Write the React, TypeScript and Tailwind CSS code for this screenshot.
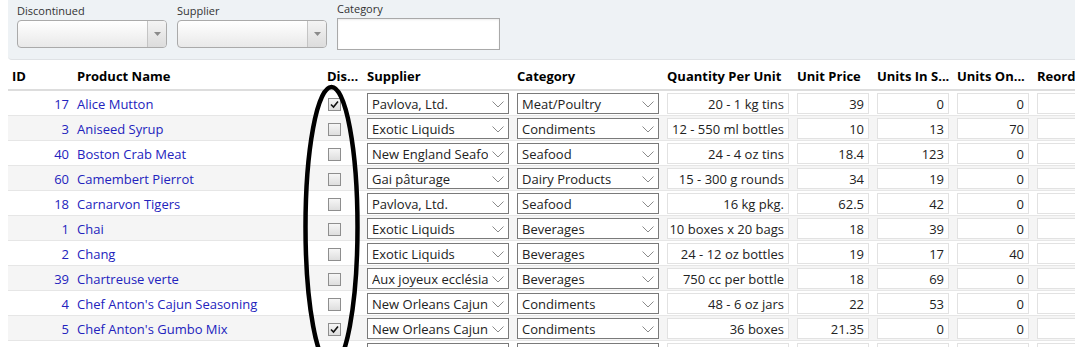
import React from 'react';

type Row = {
  id: number;
  name: string;
  disc: boolean;
  sup: string;
  cat: string;
  qty: string;
  price: string;
  stock: string;
  order: string;
  reorder: string;
};

const rows: Row[] = [
  { id: 17, name: 'Alice Mutton', disc: true, sup: 'Pavlova, Ltd.', cat: 'Meat/Poultry', qty: '20 - 1 kg tins', price: '39', stock: '0', order: '0', reorder: '0' },
  { id: 3, name: 'Aniseed Syrup', disc: false, sup: 'Exotic Liquids', cat: 'Condiments', qty: '12 - 550 ml bottles', price: '10', stock: '13', order: '70', reorder: '25' },
  { id: 40, name: 'Boston Crab Meat', disc: false, sup: 'New England Seafood Cannery', cat: 'Seafood', qty: '24 - 4 oz tins', price: '18.4', stock: '123', order: '0', reorder: '30' },
  { id: 60, name: 'Camembert Pierrot', disc: false, sup: 'Gai pâturage', cat: 'Dairy Products', qty: '15 - 300 g rounds', price: '34', stock: '19', order: '0', reorder: '0' },
  { id: 18, name: 'Carnarvon Tigers', disc: false, sup: 'Pavlova, Ltd.', cat: 'Seafood', qty: '16 kg pkg.', price: '62.5', stock: '42', order: '0', reorder: '0' },
  { id: 1, name: 'Chai', disc: false, sup: 'Exotic Liquids', cat: 'Beverages', qty: '10 boxes x 20 bags', price: '18', stock: '39', order: '0', reorder: '10' },
  { id: 2, name: 'Chang', disc: false, sup: 'Exotic Liquids', cat: 'Beverages', qty: '24 - 12 oz bottles', price: '19', stock: '17', order: '40', reorder: '25' },
  { id: 39, name: 'Chartreuse verte', disc: false, sup: 'Aux joyeux ecclésiastiques', cat: 'Beverages', qty: '750 cc per bottle', price: '18', stock: '69', order: '0', reorder: '5' },
  { id: 4, name: "Chef Anton's Cajun Seasoning", disc: false, sup: 'New Orleans Cajun Delights', cat: 'Condiments', qty: '48 - 6 oz jars', price: '22', stock: '53', order: '0', reorder: '0' },
  { id: 5, name: "Chef Anton's Gumbo Mix", disc: true, sup: 'New Orleans Cajun Delights', cat: 'Condiments', qty: '36 boxes', price: '21.35', stock: '0', order: '0', reorder: '0' },
  { id: 48, name: 'Chocolade', disc: false, sup: 'Zaanse Snoepfabriek', cat: 'Confections', qty: '10 pkgs.', price: '12.75', stock: '15', order: '70', reorder: '25' },
];

function Chevron() {
  return (
    <svg className="absolute right-[4px] top-[7px]" width="12" height="7" viewBox="0 0 12 7" fill="none">
      <path d="M0.5 0.5 L6 6 L11.5 0.5" stroke="#8a8a8a" strokeWidth="1" />
    </svg>
  );
}

function Select({ value }: { value: string }) {
  return (
    <div className="relative flex h-[21px] w-[142px] border border-[#7a7a7a] bg-white pl-[4px] text-[13px] leading-[20px] text-[#222]">
      <div className="w-[116px] overflow-hidden whitespace-nowrap">{value}</div>
      <Chevron />
    </div>
  );
}

function Input({ value, w }: { value: string; w: string }) {
  return (
    <div className={`h-[21px] ${w} shrink-0 border border-[#e2e2e2] bg-white pr-[4px] text-right overflow-hidden whitespace-nowrap text-[13px] leading-[20px] text-[#222]`}>
      {value}
    </div>
  );
}

function Checkbox({ checked }: { checked: boolean }) {
  return (
    <div className="relative w-[13px] h-[13px] border border-[#8e8e8e] bg-gradient-to-b from-[#f6f6f6] to-[#dedede]">
      {checked && (
        <svg className="absolute left-[1px] top-[1px]" width="9" height="9" viewBox="0 0 9 9" fill="none">
          <path d="M1 4.5 L3.5 7 L8 1.5" stroke="#111" strokeWidth="1.6" />
        </svg>
      )}
    </div>
  );
}

function FilterSelect() {
  return (
    <div className="flex h-[28px] w-[150px] rounded-[4px] border border-[#aaaaaa] overflow-hidden bg-gradient-to-b from-white to-[#e9e9e9]">
      <div className="flex-1" />
      <div className="w-[19px] border-l border-[#c4c4c4] bg-gradient-to-b from-[#f4f4f4] to-[#dcdcdc] flex items-center justify-center">
        <svg width="7" height="4" viewBox="0 0 7 4">
          <path d="M0 0 L7 0 L3.5 4 Z" fill="#8a8a8a" />
        </svg>
      </div>
    </div>
  );
}

const headers: { label: string; w: string }[] = [
  { label: 'ID', w: 'w-[65px]' },
  { label: 'Product Name', w: 'w-[250px]' },
  { label: 'Dis...', w: 'w-[40px]' },
  { label: 'Supplier', w: 'w-[150px]' },
  { label: 'Category', w: 'w-[150px]' },
  { label: 'Quantity Per Unit', w: 'w-[130px]' },
  { label: 'Unit Price', w: 'w-[80px]' },
  { label: 'Units In S...', w: 'w-[80px]' },
  { label: 'Units On...', w: 'w-[80px]' },
  { label: 'Reorder Level', w: 'w-[80px]' },
];

export default function App() {
  return (
    <div className="relative w-[1075px] h-[347px] overflow-hidden bg-white font-['Open_Sans',sans-serif] text-[#222]">
      {/* Filter panel */}
      <div className="ml-[8px] h-[60px] bg-[#eef2f5] border-b border-[#dfe2e5] rounded-bl-[4px] flex gap-[10px] pl-[9px]">
        <div className="flex flex-col pt-[3px]">
          <div className="h-[16px] text-[11px] leading-[16px] text-[#333]">Discontinued</div>
          <div className="mt-[1px]">
            <FilterSelect />
          </div>
        </div>
        <div className="flex flex-col pt-[3px]">
          <div className="h-[16px] text-[11px] leading-[16px] text-[#333]">Supplier</div>
          <div className="mt-[1px]">
            <FilterSelect />
          </div>
        </div>
        <div className="flex flex-col pt-[1px]">
          <div className="h-[16px] text-[11px] leading-[16px] text-[#333]">Category</div>
          <div className="mt-[1px] h-[32px] w-[163px] border border-[#a9a9a9] bg-white shadow-[inset_0_1px_2px_rgba(0,0,0,0.08)]" />
        </div>
      </div>

      {/* Table */}
      <div className="ml-[8px] w-[1120px]">
        <div className="flex h-[31px] border-b-2 border-[#dddddd] pt-[4px] items-center">
          {headers.map((h) => (
            <div key={h.label} className={`${h.w} shrink-0 pl-[4px] text-[13px] font-bold text-black whitespace-nowrap overflow-hidden`}>
              {h.label}
            </div>
          ))}
        </div>
        {rows.map((r, i) => (
          <div
            key={r.id}
            className={`flex h-[25px] border-b border-[#e6e6e6] ${i % 2 === 1 ? 'bg-[#f5f5f5]' : 'bg-white'}`}
          >
            <div className="w-[65px] shrink-0 pr-[4px] pt-[1px] text-right text-[13px] leading-[24px] text-[#2323bd]">{r.id}</div>
            <div className="w-[250px] shrink-0 pl-[4px] pt-[1px] text-[13px] leading-[24px] text-[#2323bd] whitespace-nowrap overflow-hidden">{r.name}</div>
            <div className="w-[40px] shrink-0 pl-[5px] pt-[7px]">
              <Checkbox checked={r.disc} />
            </div>
            <div className="w-[150px] shrink-0 pl-[4px] pt-[2px]">
              <Select value={r.sup} />
            </div>
            <div className="w-[150px] shrink-0 pl-[4px] pt-[2px]">
              <Select value={r.cat} />
            </div>
            <div className="w-[130px] shrink-0 pl-[4px] pt-[2px]">
              <Input value={r.qty} w="w-[122px]" />
            </div>
            <div className="w-[80px] shrink-0 pl-[4px] pt-[2px]">
              <Input value={r.price} w="w-[72px]" />
            </div>
            <div className="w-[80px] shrink-0 pl-[4px] pt-[2px]">
              <Input value={r.stock} w="w-[72px]" />
            </div>
            <div className="w-[80px] shrink-0 pl-[4px] pt-[2px]">
              <Input value={r.order} w="w-[72px]" />
            </div>
            <div className="w-[80px] shrink-0 pl-[4px] pt-[2px]">
              <Input value={r.reorder} w="w-[72px]" />
            </div>
          </div>
        ))}
      </div>

      {/* Hand-drawn annotation ellipse over the Discontinued column */}
      <svg className="absolute left-0 top-0 pointer-events-none" width="1075" height="347" viewBox="0 0 1075 347">
        <ellipse cx="331.5" cy="227" rx="26" ry="140" fill="none" stroke="#000" strokeWidth="4.5" />
      </svg>
    </div>
  );
}
